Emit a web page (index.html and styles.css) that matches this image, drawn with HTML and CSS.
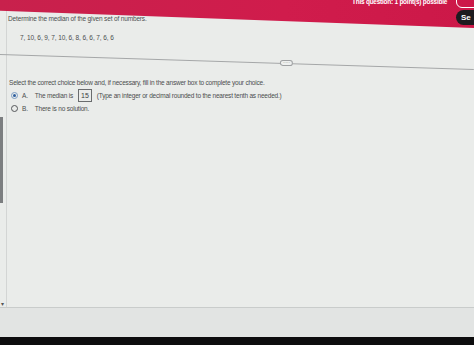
FILE: index.html
```html
<!DOCTYPE html>
<html>
<head>
<meta charset="utf-8">
<link rel="stylesheet" href="styles.css">
</head>
<body>
<div class="screen">
  <header class="topbar">
    <span class="points">This question: 1 point(s) possible</span>
    <span class="btn-outline"></span>
    <span class="btn-dark">Se</span>
  </header>
  <main class="content">
    <div class="scrolltrack"><div class="thumb"></div><div class="arrow">▾</div></div>
    <section class="question">
      <p class="prompt">Determine the median of the given set of numbers.</p>
      <p class="numbers">7, 10, 6, 9, 7, 10, 6, 8, 6, 6, 7, 6, 6</p>
    </section>
    <div class="divider"><span class="dots">.....</span></div>
    <section class="answer">
      <p class="instr">Select the correct choice below and, if necessary, fill in the answer box to complete your choice.</p>
      <div class="choice first">
        <span class="radio checked"></span><span class="letter">A.</span>
        <span>The median is</span><span class="box">15</span><span>(Type an integer or decimal rounded to the nearest tenth as needed.)</span>
      </div>
      <div class="choice">
        <span class="radio"></span><span class="letter">B.</span>
        <span>There is no solution.</span>
      </div>
    </section>
  </main>
  <footer class="bottom"></footer>
  <div class="bezel"></div>
</div>
</body>
</html>
```
FILE: styles.css
```css
html, body { margin: 0; padding: 0; }
body {
  width: 474px; height: 345px; overflow: hidden;
  background: #e6e8e7;
  font-family: "Liberation Sans", Arial, sans-serif;
  color: #4a4c4e;
}
.screen { position: relative; width: 474px; height: 345px; display: flex; flex-direction: column; }
.topbar {
  position: absolute; left: 0; top: 0; width: 474px; height: 28px;
  background: linear-gradient(90deg, #c8214c, #d01c4c 60%, #cc1848);
  clip-path: polygon(0 0, 100% 0, 100% 100%, 0 38%);
  z-index: 2;
}
.points {
  position: absolute; left: 352px; top: -2px;
  color: #fff; font-size: 6.5px; font-weight: bold; letter-spacing: -0.25px; white-space: nowrap;
}
.btn-outline {
  position: absolute; right: -6px; top: -6px; width: 22px; height: 12px;
  border: 1px solid #fff; border-radius: 6px;
}
.btn-dark {
  position: absolute; right: -8px; top: 10px; width: 26px; height: 15px;
  background: #1d1b1f; border-radius: 8px; color: #fff;
  font-size: 8px; font-weight: bold; line-height: 15px; padding-left: 5px; box-sizing: border-box;
}
.content {
  position: relative; flex: 0 0 308px; background: #eaecea;
  border-bottom: 1px solid #c9cccb; padding-top: 14px; box-sizing: border-box;
}
.scrolltrack { position: absolute; left: 0; top: 0; bottom: 0; width: 6px; border-right: 1px solid #d3d5d4; }
.thumb { position: absolute; left: 0; top: 117px; width: 3px; height: 86px; background: #7c7e80; }
.arrow { position: absolute; left: 1px; bottom: 0; font-size: 6px; color: #555; }
p { margin: 0; line-height: 9px; }
.question { padding-left: 8px; font-size: 6.5px; letter-spacing: -0.15px; }
.numbers { margin: 10px 0 0 12px; font-size: 6.5px; letter-spacing: -0.1px; }
.divider {
  position: relative; margin-top: 12px; height: 1px; background: #a5a7a8;
  transform: rotate(1.8deg); transform-origin: left center;
}
.dots {
  position: absolute; left: 280px; top: -3px; height: 6px; width: 13px;
  border: 1px solid #9fa1a3; border-radius: 3px; background: #eef0ef;
  font-size: 5px; line-height: 1px; text-align: center; color: #777; box-sizing: border-box;
}
.answer { padding: 23px 0 0 9px; font-size: 6.5px; letter-spacing: -0.2px; }
.choice { display: flex; align-items: center; gap: 4px; height: 11px; margin-top: 2px; }
.choice.first { margin-top: 3px; }
.radio { width: 5px; height: 5px; border: 1px solid #55575a; border-radius: 50%; margin-left: 2px; position: relative; flex: none; }
.radio.checked { border-color: #7b9cc4; }
.radio.checked::after { content: ""; position: absolute; left: 1px; top: 1px; width: 3px; height: 3px; border-radius: 50%; background: #2f5f9e; }
.letter { margin-right: 3px; }
.box { border: 1px solid #6a6c6e; padding: 2px 2px; font-size: 7px; line-height: 7px; color: #3b3d40; margin: 0 1px; letter-spacing: 0; }
.bottom { flex: 0 0 29px; background: #e2e4e3; }
.bezel { flex: 1; background: #0d0d0e; }
```
